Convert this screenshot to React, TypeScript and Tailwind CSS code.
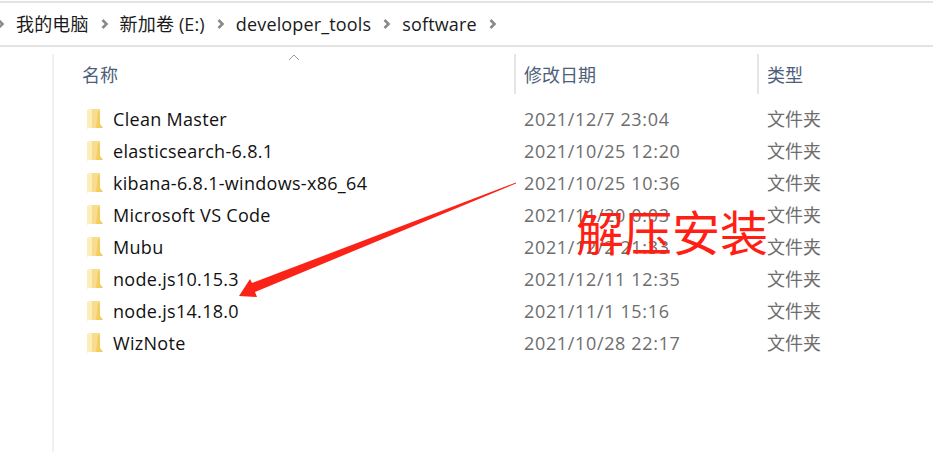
const rows = [
  { name: 'Clean Master', date: '2021/12/7 23:04' },
  { name: 'elasticsearch-6.8.1', date: '2021/10/25 12:20' },
  { name: 'kibana-6.8.1-windows-x86_64', date: '2021/10/25 10:36' },
  { name: 'Microsoft VS Code', date: '2021/11/20 0:03' },
  { name: 'Mubu', date: '2021/12/2 21:33' },
  { name: 'node.js10.15.3', date: '2021/12/11 12:35' },
  { name: 'node.js14.18.0', date: '2021/11/1 15:16' },
  { name: 'WizNote', date: '2021/10/28 22:17' },
];

const crumbs = ['我的电脑', '新加卷 (E:)', 'developer_tools', 'software'];

function Chevron() {
  return (
    <svg width="9" height="12" viewBox="0 0 9 12" className="shrink-0">
      <path d="M2.5 2 L6.5 6 L2.5 10" fill="none" stroke="#8a8a8a" strokeWidth="2.6" />
    </svg>
  );
}

function FolderIcon() {
  return (
    <svg width="18" height="22" viewBox="0 0 18 22" className="shrink-0">
      <path d="M4 1 H14 V16 L17 20 H4 Z" fill="#f8de8c" />
      <path d="M12 3 H14 V16 L17 20 H10 Z" fill="#f3cd5f" />
      <path d="M1 2 L6 1 L8 3 V18 L1 21 Z" fill="#fdeeb8" />
      <path d="M6 1 L8 3 V18 L6 19 Z" fill="#f6dc93" />
    </svg>
  );
}

export default function App() {
  return (
    <div className="relative h-[452px] w-[933px] overflow-hidden bg-white font-['Open_Sans','Noto_Sans_CJK_SC',sans-serif] text-[18px]">
      <div className="mt-[1px] flex h-[46px] items-center gap-[11px] border-y-2 border-[#e4e4e4] text-[#1a1a1a]">
        <div className="-ml-[4px]">
          <Chevron />
        </div>
        {crumbs.map((c) => (
          <div key={c} className="flex items-center gap-[11px]">
            <span className="leading-none tracking-[0.15px]">{c}</span>
            <Chevron />
          </div>
        ))}
      </div>

      <div className="mt-[7px] ml-[52px] h-[399px] border-l-2 border-[#f0f0f0]">
        <div className="relative flex h-[40px] items-center text-[#4c607a]">
          <div className="w-[460px] pt-[2px] pl-[28px]">名称</div>
          <div className="h-full w-[243px] border-l-2 border-[#e5e5e5] pl-[8px] leading-[42px]">修改日期</div>
          <div className="h-full border-l-2 border-[#e5e5e5] pl-[8px] leading-[42px]">类型</div>
          <svg width="12" height="7" viewBox="0 0 12 7" className="absolute top-0 left-[234px]">
            <path d="M1 6 L6 1 L11 6" fill="none" stroke="#9a9a9a" strokeWidth="1" />
          </svg>
        </div>

        <div className="mt-[9px]">
          {rows.map((r) => (
            <div key={r.name} className="flex h-[32px] items-center">
              <div className="flex w-[470px] items-center pl-[32px]">
                <FolderIcon />
                <span className="ml-[9px] whitespace-nowrap tracking-[0.3px] text-[#111111]">{r.name}</span>
              </div>
              <div className="w-[243px] whitespace-nowrap tracking-[0.65px] text-[#6d6d6d]">{r.date}</div>
              <div className="whitespace-nowrap text-[#6d6d6d]">文件夹</div>
            </div>
          ))}
        </div>
      </div>

      <svg width="933" height="452" viewBox="0 0 933 452" className="pointer-events-none absolute top-0 left-0">
        <path d="M516 182.5 L252 283 L250 279 L239 296 L257 297 L255 292 L516 183.5 Z" fill="#fb2318" />
      </svg>
      <div className="absolute top-[205px] left-[576px] text-[48px] leading-[56px] whitespace-nowrap text-[#ff1f14]">解压安装</div>
    </div>
  );
}
